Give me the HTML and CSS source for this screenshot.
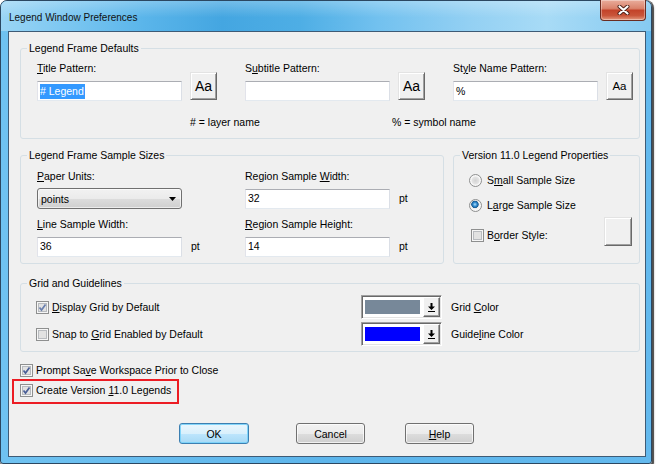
FILE: index.html
```html
<!DOCTYPE html>
<html lang="en">
<head>
  <meta charset="UTF-8">
  <title>Legend Window Preferences</title>
  <link rel="stylesheet" href="styles.css">
</head>
<body>
  <div class="window">
    <div class="titlebar">
      <span class="title">Legend Window Preferences</span>
      <button class="close" aria-label="Close">
        <svg width="13" height="10" viewBox="0 0 13 10">
          <path d="M2.5 1.5l8 7M10.5 1.5l-8 7" stroke="#4a1f16" stroke-width="4" stroke-linecap="round" fill="none"/>
          <path d="M2.5 1.5l8 7M10.5 1.5l-8 7" stroke="#fff" stroke-width="2.2" stroke-linecap="round" fill="none"/>
        </svg>
      </button>
    </div>

    <div class="frame">
      <div class="client">

        <fieldset class="group">
          <legend>Legend Frame Defaults</legend>
          <div class="defaults-body">
            <div class="pattern-row">
              <div class="pattern">
                <div class="field">
                  <label><u>T</u>itle Pattern:</label>
                  <div class="textbox"><span class="sel"># Legend</span></div>
                </div>
                <button class="font-btn">Aa</button>
              </div>
              <div class="pattern">
                <div class="field">
                  <label>S<u>u</u>btitle Pattern:</label>
                  <div class="textbox"></div>
                </div>
                <button class="font-btn">Aa</button>
              </div>
              <div class="pattern">
                <div class="field">
                  <label>St<u>y</u>le Name Pattern:</label>
                  <div class="textbox">%</div>
                </div>
                <button class="font-btn small">Aa</button>
              </div>
            </div>
            <div class="notes">
              <span class="note-layer"># = layer name</span>
              <span>% = symbol name</span>
            </div>
          </div>
        </fieldset>

        <div class="group-row">
          <fieldset class="group sizes">
            <legend>Legend Frame Sample Sizes</legend>
            <div class="sizes-body">
              <div class="cell">
                <label><u>P</u>aper Units:</label>
                <div class="control-row">
                  <div class="select">
                    <span>points</span>
                    <svg width="7" height="4" viewBox="0 0 7 4"><path d="M0 0h7L3.5 4z" fill="#000"/></svg>
                  </div>
                </div>
              </div>
              <div class="cell">
                <label>Region Sample <u>W</u>idth:</label>
                <div class="control-row">
                  <div class="textbox">32</div>
                  <span>pt</span>
                </div>
              </div>
              <div class="cell">
                <label><u>L</u>ine Sample Width:</label>
                <div class="control-row">
                  <div class="textbox">36</div>
                  <span>pt</span>
                </div>
              </div>
              <div class="cell">
                <label><u>R</u>egion Sample Height:</label>
                <div class="control-row">
                  <div class="textbox">14</div>
                  <span>pt</span>
                </div>
              </div>
            </div>
          </fieldset>

          <fieldset class="group version">
            <legend>Version 11.0 Legend Properties</legend>
            <div class="version-body">
              <div class="option radio-option">
                <span class="radio"></span>
                <span>S<u>m</u>all Sample Size</span>
              </div>
              <div class="option radio-option">
                <span class="radio checked"></span>
                <span>L<u>a</u>rge Sample Size</span>
              </div>
              <div class="border-row">
                <div class="option">
                  <svg class="check" viewBox="0 0 13 13"><rect x="0.5" y="0.5" width="12" height="12" fill="#f6f6f6" stroke="#8e8f8f"/><rect x="2.5" y="2.5" width="8" height="8" fill="#e2e2e2" stroke="#b8bbbf"/></svg>
                  <span>B<u>o</u>rder Style:</span>
                </div>
                <button class="style-btn"></button>
              </div>
            </div>
          </fieldset>
        </div>

        <fieldset class="group grid-group">
          <legend>Grid and Guidelines</legend>
          <div class="grid-body">
            <div class="option">
              <svg class="check" viewBox="0 0 13 13"><rect x="0.5" y="0.5" width="12" height="12" fill="#f6f6f6" stroke="#8e8f8f"/><rect x="2.5" y="2.5" width="8" height="8" fill="#e2e2e2" stroke="#b8bbbf"/><path d="M3.5 6.5l2 2.5 4-5.5" fill="none" stroke="#6a7fae" stroke-width="1.7"/></svg>
              <span><u>D</u>isplay Grid by Default</span>
            </div>
            <div class="color-row">
              <div class="color-pick">
                <span class="swatch grid-swatch"></span>
                <span class="drop">
                  <svg width="7" height="9" viewBox="0 0 7 9"><path d="M2.5 0h2v3.5H7L3.5 7 0 3.5h2.5z" fill="#000"/><rect y="8" width="7" height="1" fill="#000"/></svg>
                </span>
              </div>
              <span>Grid <u>C</u>olor</span>
            </div>
            <div class="option">
              <svg class="check" viewBox="0 0 13 13"><rect x="0.5" y="0.5" width="12" height="12" fill="#f6f6f6" stroke="#8e8f8f"/><rect x="2.5" y="2.5" width="8" height="8" fill="#e2e2e2" stroke="#b8bbbf"/></svg>
              <span>Snap to <u>G</u>rid Enabled by Default</span>
            </div>
            <div class="color-row">
              <div class="color-pick">
                <span class="swatch guide-swatch"></span>
                <span class="drop">
                  <svg width="7" height="9" viewBox="0 0 7 9"><path d="M2.5 0h2v3.5H7L3.5 7 0 3.5h2.5z" fill="#000"/><rect y="8" width="7" height="1" fill="#000"/></svg>
                </span>
              </div>
              <span>Guide<u>l</u>ine Color</span>
            </div>
          </div>
        </fieldset>

        <div class="option prompt">
          <svg class="check" viewBox="0 0 13 13"><rect x="0.5" y="0.5" width="12" height="12" fill="#f6f6f6" stroke="#8e8f8f"/><rect x="2.5" y="2.5" width="8" height="8" fill="#e2e2e2" stroke="#b8bbbf"/><path d="M3.5 6.5l2 2.5 4-5.5" fill="none" stroke="#4a5f97" stroke-width="1.7"/></svg>
          <span>Prompt Sa<u>v</u>e Workspace Prior to Close</span>
        </div>
        <div class="highlight">
          <div class="option">
            <svg class="check" viewBox="0 0 13 13"><rect x="0.5" y="0.5" width="12" height="12" fill="#f6f6f6" stroke="#8e8f8f"/><rect x="2.5" y="2.5" width="8" height="8" fill="#e2e2e2" stroke="#b8bbbf"/><path d="M3.5 6.5l2 2.5 4-5.5" fill="none" stroke="#4a5f97" stroke-width="1.7"/></svg>
            <span>Create Version <u>1</u>1.0 Legends</span>
          </div>
        </div>

        <div class="actions">
          <button class="btn btn-default">OK</button>
          <button class="btn btn-cancel">Cancel</button>
          <button class="btn btn-help"><u>H</u>elp</button>
        </div>

      </div>
    </div>
  </div>
</body>
</html>
```

FILE: styles.css
```css
body {
  margin: 0;
  background: #ffffff;
  font-family: "Liberation Sans", Arial, sans-serif;
  font-size: 10.5px;
  line-height: 13px;
  color: #000;
}

button {
  font-family: "Liberation Sans", Arial, sans-serif;
  font-size: 10.5px;
  color: #000;
  padding: 0;
}

u {
  text-decoration-thickness: 1px;
  text-underline-offset: 1px;
}

.window {
  position: relative;
  width: 652px;
  height: 464px;
  box-sizing: border-box;
  border: 1px solid #2b4761;
  border-radius: 7px 7px 3px 3px;
  background: linear-gradient(to right, #6fc2f1, #5db5eb 50%, #63b9ee);
  box-shadow: 1px 1px 0 1px rgba(50, 50, 50, 0.75), 2px 2px 2px rgba(0, 0, 0, 0.35);
}

.titlebar {
  height: 30px;
  box-sizing: border-box;
  display: flex;
  align-items: center;
  padding: 3px 0 0 8px;
  border-radius: 6px 6px 0 0;
  background:
    linear-gradient(to bottom, rgba(255, 255, 255, 0.25), rgba(255, 255, 255, 0) 55%),
    linear-gradient(to right, #9ad5f5 0%, #7cc7f1 10%, #5ab5ea 22%, #44a6e1 34%, #4eaee5 46%, #72c1ef 58%, #93d0f3 72%, #a8dbf6 84%, #86caf1 100%);
}

.title {
  font-size: 10px;
  color: #111;
}

.close {
  position: absolute;
  top: -1px;
  right: 5px;
  width: 46px;
  height: 21px;
  border: 1px solid #6a2c21;
  border-top: none;
  border-radius: 0 0 4px 4px;
  background: linear-gradient(to bottom, #e9ad9c 0%, #da836c 42%, #c3432a 52%, #c9553a 78%, #e39a80 100%);
  box-shadow: inset 0 0 0 1px rgba(255, 255, 255, 0.35);
  display: flex;
  align-items: center;
  justify-content: center;
}

.frame {
  padding: 0 5px 6px 7px;
}

.client {
  height: 426px;
  box-sizing: border-box;
  border: 1px solid #3e5b76;
  background: #f0f0f0;
  padding: 10px 5px 0 11px;
}

/* group boxes */

.group {
  margin: 0;
  padding: 0;
  min-width: 0;
  border: 1px solid #d5dfe5;
  border-radius: 3px;
}

.group legend {
  margin-left: 6px;
  padding: 0 2px;
}

.defaults-body {
  padding: 7px 0 9px 16px;
}

.pattern-row {
  display: flex;
  gap: 28px;
}

.pattern {
  display: flex;
  align-items: flex-end;
  gap: 8px;
}

.field {
  display: flex;
  flex-direction: column;
  gap: 6px;
}

.textbox {
  width: 145px;
  height: 20px;
  box-sizing: border-box;
  border: 1px solid;
  border-color: #abadb3 #dbdfe6 #e3e9ef #e2e3ea;
  background: #fff;
  padding: 0 2px;
  display: flex;
  align-items: center;
}

.sel {
  background: #3399ff;
  color: #fff;
  line-height: 15px;
  padding-right: 1px;
}

.font-btn {
  width: 27px;
  height: 28px;
  margin-bottom: 1px;
  border: 1px solid;
  border-color: #e3e3e3 #696969 #696969 #e3e3e3;
  box-shadow: inset 1px 1px #fff, inset -1px -1px #a0a0a0;
  background: #f0f0f0;
  font-size: 14px;
}

.font-btn.small {
  font-size: 11.5px;
}

.notes {
  display: flex;
  margin-top: 15px;
  padding-left: 153px;
}

.note-layer {
  width: 202px;
}

.group-row {
  display: flex;
  gap: 9px;
  margin-top: 10px;
}

.sizes {
  width: 422px;
  flex: none;
}

.version {
  flex: 1;
}

.sizes-body {
  display: grid;
  grid-template-columns: 208px 208px;
  row-gap: 9px;
  padding: 8px 0 6px 16px;
}

.control-row {
  display: flex;
  align-items: center;
  gap: 9px;
  height: 21px;
  margin-top: 5px;
}

.select {
  width: 145px;
  height: 21px;
  box-sizing: border-box;
  border: 1px solid #707070;
  border-radius: 3px;
  background: linear-gradient(to bottom, #f2f2f2, #ebebeb 50%, #dddddd 50%, #cfcfcf);
  box-shadow: inset 0 0 0 1px rgba(255, 255, 255, 0.6);
  display: flex;
  align-items: center;
  justify-content: space-between;
  padding: 1px 5px 0 3px;
}

.version-body {
  display: flex;
  flex-direction: column;
  gap: 12px;
  padding: 12px 7px 0 15px;
}

.option {
  display: flex;
  align-items: center;
  gap: 3px;
  height: 13px;
}

.radio-option {
  gap: 5px;
}

.radio {
  width: 13px;
  height: 13px;
  box-sizing: border-box;
  border: 1px solid #8e8f8f;
  border-radius: 50%;
  background: radial-gradient(circle, #d3d3d3 0, #e4e4e4 3.5px, #f7f7f7 4.5px);
}

.radio.checked {
  background: radial-gradient(circle at 45% 40%, #b4e2fb 0, #2f8ad0 2px, #1a5b91 3.4px, #e8e8e8 4px, #f7f7f7 5px);
}

.check {
  width: 13px;
  height: 13px;
  flex: none;
}

.border-row {
  display: flex;
  align-items: flex-end;
  justify-content: space-between;
  margin-top: -7px;
}

.border-row .option {
  margin-bottom: 4px;
  margin-left: 2px;
}

.style-btn {
  width: 28px;
  height: 29px;
  border: 1px solid;
  border-color: #e3e3e3 #696969 #696969 #e3e3e3;
  box-shadow: inset 1px 1px #fff, inset -1px -1px #a0a0a0;
  background: #f0f0f0;
}

.grid-group {
  margin-top: 13px;
}

.grid-body {
  display: grid;
  grid-template-columns: 325px auto;
  grid-auto-rows: 24px;
  row-gap: 3px;
  align-items: center;
  padding: 5px 0 5px 15px;
}

.color-row {
  display: flex;
  align-items: center;
  gap: 9px;
}

.color-pick {
  display: flex;
  width: 81px;
  height: 24px;
  box-sizing: border-box;
  border: 1px solid;
  border-color: #a0a0a0 #fff #fff #a0a0a0;
  box-shadow: inset 1px 1px #696969, inset -1px -1px #e3e3e3;
  background: #fff;
  padding: 1px 1px 1px 3px;
}

.swatch {
  width: 55px;
  margin: 3px 3px 3px 0;
}

.grid-swatch {
  background: #778899;
}

.guide-swatch {
  background: #0000ff;
}

.drop {
  width: 17px;
  box-sizing: border-box;
  border: 1px solid;
  border-color: #fff #696969 #696969 #fff;
  box-shadow: inset -1px -1px #a0a0a0;
  background: #f0f0f0;
  display: flex;
  align-items: center;
  justify-content: center;
}

.prompt {
  margin-top: 12px;
}

.highlight {
  display: inline-block;
  margin: 2px 0 0 -8px;
  padding: 3px 6px 5px 6px;
  border: 2px solid #ec1c24;
}

.actions {
  display: flex;
  margin-top: 19px;
  padding-left: 159px;
}

.btn {
  width: 69px;
  height: 21px;
  box-sizing: border-box;
  border: 1px solid #707070;
  border-radius: 3px;
  background: linear-gradient(to bottom, #f2f2f2, #ebebeb 50%, #dddddd 50%, #cfcfcf);
  box-shadow: inset 0 0 0 1px rgba(255, 255, 255, 0.7);
}

.btn-default {
  width: 70px;
  border-color: #3c7fb1;
  background: linear-gradient(to bottom, #eaf6fd, #d9f0fc 50%, #bee6fd 50%, #a7d9f5);
  box-shadow: inset 0 0 0 1px rgba(120, 210, 250, 0.9);
}

.btn-cancel {
  margin-left: 47px;
}

.btn-help {
  margin-left: 40px;
}
```
